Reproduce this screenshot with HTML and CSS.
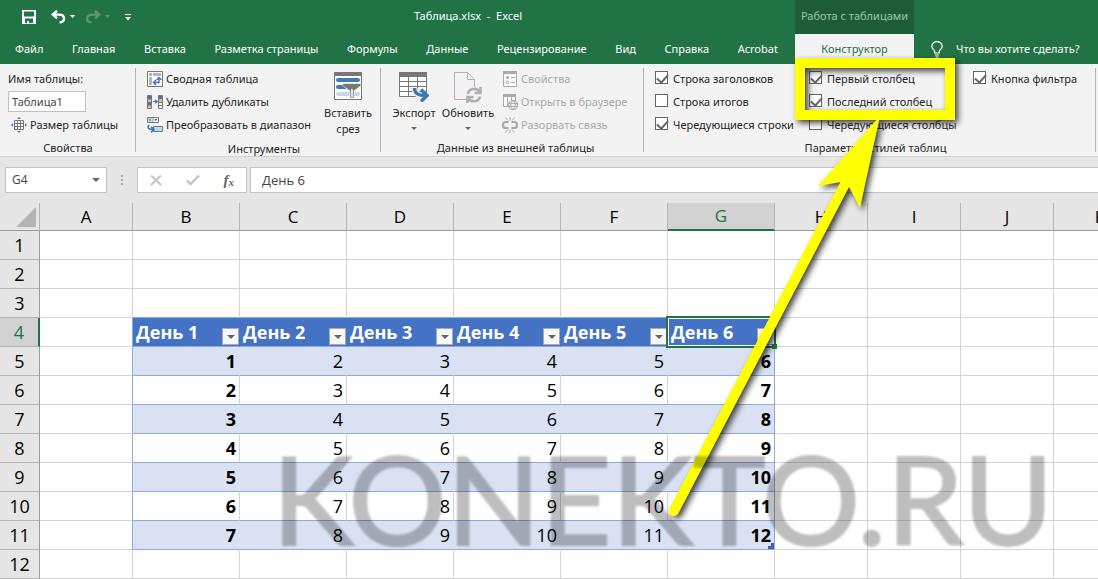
FILE: index.html
```html
<!DOCTYPE html>
<html lang="ru">
<head>
<meta charset="utf-8">
<title>Таблица.xlsx - Excel</title>
<link rel="stylesheet" href="styles.css">
</head>
<body>
<header class="titlebar">
  <div class="quick">
    <button class="quick-btn save" aria-label="Сохранить"><svg width="14" height="14" viewBox="0 0 14 14"><path fill="#fff" fill-rule="evenodd" d="M0 0h14v14H0zM2 1.500v5h10v-5zM3 8.500V13h2v-2h2v2h4V8.500z"/></svg></button>
    <button class="quick-btn undo" aria-label="Отменить"><svg width="24" height="14" viewBox="0 0 24 14"><path fill="none" stroke="#fff" stroke-width="2.400" d="M6 .8L1.800 4.600 6 8.400M2 4.600h6.500c3 0 4.500 1.600 4.500 4s-1.600 3.800-4.500 3.800"/><path fill="#fff" d="M19 5h5l-2.500 3z"/></svg></button>
    <button class="quick-btn redo" aria-label="Повторить"><svg width="24" height="14" viewBox="0 0 24 14"><g opacity=".25"><path fill="none" stroke="#fff" stroke-width="2.400" d="M9 .8l4.200 3.800L9 8.400M13 4.600H6.500C3.500 4.600 1 6.200 1 8.600s1.600 3.800 4.500 3.800"/><path fill="#fff" d="M19 5h5l-2.500 3z"/></g></svg></button>
    <button class="quick-btn more" aria-label="Настройка панели"><svg width="6" height="7" viewBox="0 0 6 7"><path fill="#fff" d="M0 0h6v1H0zM0 3h6L3 6.500z"/></svg></button>
  </div>
  <h1 class="doc-title">Таблица.xlsx&nbsp; -&nbsp; Excel</h1>
  <div class="context-title">Работа с таблицами</div>
</header>
<nav class="tabs">
  <div class="tab-list">
    <button>Файл</button>
    <button>Главная</button>
    <button>Вставка</button>
    <button>Разметка страницы</button>
    <button>Формулы</button>
    <button>Данные</button>
    <button>Рецензирование</button>
    <button>Вид</button>
    <button>Справка</button>
    <button>Acrobat</button>
  </div>
  <button class="active">Конструктор</button>
  <button class="tell"><svg width="12" height="17" viewBox="0 0 12 17"><path fill="none" stroke="#fff" stroke-width="1.200" d="M3.700 12V10.500C3.700 9 .8 8 .8 5.200a5.200 4.600 0 0 1 10.400 0C11.200 8 8.300 9 8.300 10.500V12zM4 14h4M4.500 16h3"/></svg>Что вы хотите сделать?</button>
</nav>
<section class="ribbon">
  <div class="group props">
    <div class="rows">
      <label class="row" for="tname">Имя таблицы:</label>
      <div class="row"><input class="tname" id="tname" value="Таблица1"></div>
      <button class="row resize"><svg width="16" height="16" viewBox="0 0 16 16"><path fill="#fff" stroke="#777" d="M3.500 3.500h9v9h-9zM3.500 6.500h9M3.500 9.500h9M6.500 3.500v9M9.500 3.500v9"/><path fill="#4a7ebb" d="M6 2l2-2 2 2zM6 14l2 2 2-2zM2 6L0 8l2 2zM14 6l2 2-2 2z"/></svg>Размер таблицы</button>
    </div>
    <div class="group-name">Свойства</div>
  </div>
  <div class="group tools">
    <div class="group-body">
      <div class="rows">
        <button class="row"><svg width="16" height="16" viewBox="0 0 16 16"><path fill="#fff" stroke="#777" d="M.5.5h15v15H.5z"/><path fill="#b5b5b5" d="M2 2h3v3H2zM6 2h8v3H6zM2 6h3v8H2z"/><path fill="none" stroke="#3f78b8" stroke-width="1.400" d="M6.500 11.500h5.500V7M9 9l-2.500 2.500L9 14M9.500 9L12 6.500 14.500 9"/></svg>Сводная таблица</button>
        <button class="row"><svg width="16" height="16" viewBox="0 0 16 16"><path fill="#fff" stroke="#777" d="M.5 1.500h4v13h-4zM11.500 1.500h4v13h-4z"/><path fill="#3f78b8" d="M1 2h3v3H1zM12 2h3v3h-3z"/><path fill="#eebb72" d="M1 5h3v3H1zM1 11h3v3H1zM12 5h3v3h-3z"/><path fill="#3f78b8" d="M1 8h3v3H1z"/><path fill="none" stroke="#777" d="M11.500 8.500h4M11.500 11.500h4M.5 5h4M.5 11h4"/><path fill="none" stroke="#3f78b8" stroke-width="1.200" d="M6 7.500h4M8.300 5.700l1.900 1.800-1.900 1.800"/></svg>Удалить дубликаты</button>
        <button class="row"><svg width="16" height="16" viewBox="0 0 16 16"><path fill="#fff" stroke="#777" d="M.5.5h11v5H.5zM6 .5v5"/><path fill="#c5d7ea" d="M1 1h4.500v4H1z"/><path fill="#666" d="M2 2.500h2v1H2zM7.300 2h3L8.800 4.200z"/><path fill="#c5d7ea" stroke="#777" d="M6.500 9.500h9v5h-9z"/><path fill="none" stroke="#3f78b8" stroke-width="1.600" d="M2 8c-2 3 0 4.500 4 4.500M4 9.800l3 2.700-3 2.900"/></svg>Преобразовать в диапазон</button>
      </div>
      <button class="big"><svg width="28" height="28" viewBox="0 0 28 28"><path fill="#fff" stroke="#777" d="M.5.5h27v27H.5z"/><path fill="#777" d="M0 0h28v4H0z"/><path fill="#3f78b8" d="M4 6h20a2 2 0 0 1 0 4H4a2 2 0 0 1 0-4zM4 13h8v4H4a2 2 0 0 1 0-4z"/><path fill="#c5d7ea" d="M4 20h20a2 2 0 0 1 0 4H4a2 2 0 0 1 0-4z"/><path fill="#777" stroke="#fff" stroke-width=".6" d="M8.500 11.500H27v2l-7 5.500V26h-4v-7l-7.500-5.500z"/><path stroke="#fff" stroke-width="1.600" d="M18 17v8"/></svg><span>Вставить<br>срез</span></button>
    </div>
    <div class="group-name">Инструменты</div>
  </div>
  <div class="group external">
    <div class="group-body">
      <button class="big export"><svg width="30" height="30" viewBox="0 0 30 30"><path fill="#fff" stroke="#777" d="M.5.5h27v24H.5zM.5 9.500h27M.5 14.500h27M.5 19.500h27M9.500 4v20M18.500 4v20"/><path fill="#777" d="M0 0h28v5H0z"/><path fill="none" stroke="#f3f3f3" stroke-width="6" d="M15.500 16c0 5 3 7.500 11 7.500"/><path fill="none" stroke="#3f78b8" stroke-width="3.500" d="M15.500 16c0 5 3 7.500 12 7.500M22 17.500l6 6-6 6"/></svg><span>Экспорт</span><i class="caret"></i></button>
      <button class="big refresh"><svg width="28" height="31" viewBox="0 0 28 31"><path fill="#f6f1f6" stroke="#b0b0b0" d="M.5.5h13l7 7v20H.5zM13.500.5v7h7"/><circle cx="20" cy="23" r="8" fill="#f3f3f3"/><path fill="none" stroke="#b0b0b0" stroke-width="2.600" d="M14 22c.5-6 9-7 12-1.500M26.500 15v6h-6M26 24.500c-1 5.500-9 6.500-12 1.500M13.500 31v-6h6"/></svg><span>Обновить</span><i class="caret"></i></button>
      <div class="rows">
        <button class="row" disabled><svg width="16" height="16" viewBox="0 0 16 16"><path fill="#fafafa" stroke="#aaa" d="M1.500.5h13v15h-13z"/><path fill="#aaa" d="M1 0h14v3H1zM9 6h4v1H9zM9 11h4v1H9z"/><circle cx="5.500" cy="6.500" r="1.500" fill="#aaa"/><circle cx="5.500" cy="11.500" r="1.300" fill="none" stroke="#aaa"/></svg>Свойства</button>
        <button class="row" disabled><svg width="16" height="16" viewBox="0 0 16 16"><path fill="#fafafa" stroke="#aaa" d="M1.500.5h12v12h-12zM5.500 2v10.500M9.500 2v10"/><path fill="#aaa" d="M1 0h13v3H1z"/><circle cx="11" cy="11" r="4.500" fill="#f3f3f3" stroke="#aaa" stroke-width="1.200"/><path fill="none" stroke="#aaa" d="M6.500 9.500h9M6.500 12.500h9M11 6.500c-3 2-3 7 0 9M11 6.500c3 2 3 7 0 9"/></svg>Открыть в браузере</button>
        <button class="row" disabled><svg width="16" height="16" viewBox="0 0 16 16"><path fill="none" stroke="#aaa" stroke-width="2.200" d="M6.500 5H4a3 3 0 0 0 0 6h2.500M9.500 5H12a3 3 0 0 1 0 6H9.500"/><path fill="none" stroke="#aaa" d="M3.500.5L6 3.500M8 0v3.500M12.500.5L10 3.500M3.500 15.500L6 12.500M8 16v-3.500M12.500 15.500L10 12.500"/></svg>Разорвать связь</button>
      </div>
    </div>
    <div class="group-name">Данные из внешней таблицы</div>
  </div>
  <div class="group options">
    <div class="checks">
      <label class="row"><input type="checkbox" checked>Строка заголовков</label>
      <label class="row"><input type="checkbox" checked>Первый столбец</label>
      <label class="row"><input type="checkbox" checked>Кнопка фильтра</label>
      <label class="row"><input type="checkbox">Строка итогов</label>
      <label class="row last"><input type="checkbox" checked>Последний столбец</label>
      <label class="row"><input type="checkbox" checked>Чередующиеся строки</label>
      <label class="row"><input type="checkbox">Чередующиеся столбцы</label>
    </div>
    <div class="group-name">Параметры стилей таблиц</div>
  </div>
</section>
<section class="formula-row">
  <div class="namebox"><input aria-label="Имя ячейки" value="G4"><button aria-label="Список имён"><i class="caret"></i></button></div>
  <svg class="dots" width="2" height="10" viewBox="0 0 2 10"><path fill="#aaa" d="M0 0h2v2H0zM0 4h2v2H0zM0 8h2v2H0z"/></svg>
  <div class="fx">
    <button aria-label="Отмена"><svg width="12" height="12" viewBox="0 0 12 12"><path stroke="#c3c3c3" stroke-width="1.800" d="M1 1.500l10 9.500M11 1.500L1 11"/></svg></button>
    <button aria-label="Ввод"><svg width="14" height="12" viewBox="0 0 14 12"><path fill="none" stroke="#c3c3c3" stroke-width="2.400" d="M1 6.500L4.500 10 13 1.500"/></svg></button>
    <button class="fx-btn" aria-label="Вставить функцию">f<sub>x</sub></button>
  </div>
  <input class="formula" aria-label="Строка формул" value="День 6">
</section>
<main class="sheet">
  <table class="grid">
    <colgroup><col class="c-num"><col class="c-std"><col class="c-day" span="6"><col class="c-std" span="4"></colgroup>
    <thead><tr><th class="corner"><svg width="20" height="20" viewBox="0 0 20 20"><path fill="#b4b4b4" d="M20 0v20H0z"/></svg></th><th>A</th><th>B</th><th>C</th><th>D</th><th>E</th><th>F</th><th class="sel">G</th><th>H</th><th>I</th><th>J</th><th>K</th></tr></thead>
    <tbody>
      <tr><th>1</th><td></td><td></td><td></td><td></td><td></td><td></td><td></td><td></td><td></td><td></td><td></td></tr>
      <tr><th>2</th><td></td><td></td><td></td><td></td><td></td><td></td><td></td><td></td><td></td><td></td><td></td></tr>
      <tr class="above"><th>3</th><td></td><td></td><td></td><td></td><td></td><td></td><td></td><td></td><td></td><td></td><td></td></tr>
      <tr class="data head"><th class="sel">4</th><td></td><td><div>День 1<button aria-label="Фильтр"><i class="caret"></i></button></div></td><td><div>День 2<button aria-label="Фильтр"><i class="caret"></i></button></div></td><td><div>День 3<button aria-label="Фильтр"><i class="caret"></i></button></div></td><td><div>День 4<button aria-label="Фильтр"><i class="caret"></i></button></div></td><td><div>День 5<button aria-label="Фильтр"><i class="caret"></i></button></div></td><td class="cursor"><div>День 6<button aria-label="Фильтр"><i class="caret"></i></button></div></td><td></td><td></td><td></td><td></td></tr>
      <tr class="data band"><th>5</th><td></td><td>1</td><td>2</td><td>3</td><td>4</td><td>5</td><td>6</td><td></td><td></td><td></td><td></td></tr>
      <tr class="data"><th>6</th><td></td><td>2</td><td>3</td><td>4</td><td>5</td><td>6</td><td>7</td><td></td><td></td><td></td><td></td></tr>
      <tr class="data band"><th>7</th><td></td><td>3</td><td>4</td><td>5</td><td>6</td><td>7</td><td>8</td><td></td><td></td><td></td><td></td></tr>
      <tr class="data"><th>8</th><td></td><td>4</td><td>5</td><td>6</td><td>7</td><td>8</td><td>9</td><td></td><td></td><td></td><td></td></tr>
      <tr class="data band"><th>9</th><td></td><td>5</td><td>6</td><td>7</td><td>8</td><td>9</td><td>10</td><td></td><td></td><td></td><td></td></tr>
      <tr class="data"><th>10</th><td></td><td>6</td><td>7</td><td>8</td><td>9</td><td>10</td><td>11</td><td></td><td></td><td></td><td></td></tr>
      <tr class="data band"><th>11</th><td></td><td>7</td><td>8</td><td>9</td><td>10</td><td>11</td><td class="end">12</td><td></td><td></td><td></td><td></td></tr>
      <tr><th>12</th><td></td><td></td><td></td><td></td><td></td><td></td><td></td><td></td><td></td><td></td><td></td></tr>
    </tbody>
  </table>
</main>
<svg class="pointer" width="300" height="540" viewBox="660 0 300 540" aria-hidden="true">
  <path fill="none" stroke="#ff0" stroke-width="10" d="M800 63h150v52H800z"/>
  <path stroke="#ff0" stroke-width="10" stroke-linecap="round" d="M674 511L845 184"/>
  <path fill="#ff0" d="M880 116L818 186l23-4 8 5 11 21z"/>
</svg>
<div class="watermark">KONEKTO.RU</div>
</body>
</html>
```
FILE: styles.css
```css
* { box-sizing: border-box; }
body {
  margin: 0;
  min-height: 100vh;
  position: relative;
  overflow: hidden;
  background: #e6e6e6;
  color: #262626;
  font: 11px/16px "Noto Sans", "Open Sans", sans-serif;
}
button, input { font: inherit; color: inherit; }
button { border: 0; padding: 0; background: none; }
svg { flex: none; display: block; }

.titlebar, .tabs { display: grid; background: #217346; color: #fff; white-space: nowrap; }
.titlebar { grid-template-columns: 141px 1fr 119px 184px; height: 34px; }
.quick { display: flex; align-items: center; padding-left: 22px; }
.quick-btn { flex: none; }
.undo { margin-left: 15px; }
.redo { margin-left: 11px; }
.more { margin-left: 15px; }
.doc-title { margin: 0; font: inherit; line-height: 32px; text-align: center; }
.context-title { background: #1c5c38; color: #9fc9af; line-height: 32px; text-align: center; }

.tabs { grid-template-columns: 1fr 119px 184px; height: 30px; }
.tab-list { display: flex; justify-content: space-between; padding: 0 17px 0 15px; }
.tabs .active { background: #f3f3f3; color: #217346; }
.tell { display: flex; align-items: center; gap: 13px; padding-left: 17px; }

.ribbon { display: flex; height: 93px; padding-top: 3px; background: #f3f3f3; border-bottom: 1px solid #d2d2d2; white-space: nowrap; }
.group { position: relative; flex: none; display: flex; flex-direction: column; }
.group::after { content: ""; position: absolute; right: 0; top: 1px; bottom: 4px; border-right: 1px solid #b5b5b5; }
.props { width: 136px; padding-left: 8px; }
.tools { width: 245px; padding-left: 11px; }
.external { width: 263px; padding-left: 6px; }
.options { width: 452px; padding-left: 11px; }
.group-body { display: flex; }
.rows { display: flex; flex-direction: column; }
.row { display: flex; align-items: center; gap: 3px; height: 23px; }
.row:disabled { color: #aaa; }
.resize { padding-left: 3px; }
.tname { width: 78px; height: 21px; padding: 0 3px; border: 1px solid #c0c0c0; background: #fff; color: #444; }
.group-name { margin-top: 4px; text-align: center; }
.props .group-name { margin-left: -8px; }
.big { display: flex; flex-direction: column; align-items: center; padding-top: 5px; width: 54px; }
.big svg { margin-bottom: 5px; }
.tools .big { margin: 0 6px 0 auto; }
.big.export svg { margin-bottom: 3px; }
.big.refresh svg { margin-bottom: 2px; }
.big .caret { margin-top: 6px; }
.big.refresh { margin-right: 7px; }
.caret { display: block; border: 3px solid transparent; border-top-color: #666; border-bottom: 0; }
.checks { display: grid; grid-template-columns: 154px 164px 1fr; }
.checks .row { gap: 5px; }
.checks .last { grid-column: span 2; }
input[type="checkbox"] {
  appearance: none;
  position: relative;
  flex: none;
  width: 13px;
  height: 13px;
  margin: 0 0 2px;
  border: 1px solid #666;
  background: #fff;
}
input[type="checkbox"]:checked::after {
  content: "";
  position: absolute;
  left: 3px;
  top: 0;
  width: 5px;
  height: 9px;
  border: solid #666;
  border-width: 0 2px 2px 0;
  transform: rotate(42deg);
}

.formula-row { display: flex; align-items: center; height: 46px; padding-left: 5px; color: #444; font-family: "Open Sans", "Noto Sans", sans-serif; }
.formula-row > * { flex: none; }
.namebox { display: flex; width: 102px; height: 26px; border: 1px solid #c3c3c3; background: #fff; font-size: 12px; }
.namebox input { flex: 1; min-width: 0; padding: 0 6px; border: 0; background: none; }
.namebox button { width: 20px; display: flex; align-items: center; justify-content: center; }
.namebox .caret, .grid .caret { border-width: 4px 4px 0; }
.dots { margin: 0 14px; }
.fx { display: flex; align-items: center; justify-content: space-around; width: 110px; height: 26px; margin-right: 3px; border: 1px solid #c3c3c3; background: #fff; }
.fx-btn { font: italic bold 15px/16px "Liberation Serif", serif; color: #666; }
.fx-btn sub { font-size: 11px; line-height: 1px; vertical-align: -1px; }
.formula-row .formula { flex: 1; height: 26px; padding: 0 11px; border: 1px solid #c3c3c3; border-right: 0; background: #fff; font-size: 13px; }

.sheet { overflow: hidden; }
.grid { width: 1147px; table-layout: fixed; border-spacing: 0; font: 18px/28px "Open Sans", "Noto Sans", sans-serif; color: #000; }
.c-num { width: 40px; }
.c-std { width: 93px; }
.c-day { width: 107px; }
.grid th { padding: 0; font-weight: 400; }
.grid thead th { height: 28px; line-height: 26px; font-size: 17px; border-right: 1px solid #b5b5b5; border-bottom: 1px solid #9b9b9b; }
.grid thead .sel { background: #d2d2d2; color: #217346; border-bottom: 2px solid #217346; }
.grid .corner svg { margin: 0 0 0 16px; }
.grid tbody th { height: 29px; line-height: 28px; background: #e6e6e6; border-right: 1px solid #9b9b9b; border-bottom: 1px solid #b5b5b5; }
.grid tbody .sel { background: #d2d2d2; color: #217346; border-right: 2px solid #217346; }
.grid td { height: 29px; padding: 0 3px; background: #fff; border-right: 1px solid #d4d4d4; border-bottom: 1px solid #d4d4d4; text-align: right; }
.data td:nth-child(2), .data td:nth-child(8) { border-right-color: #8ea9db; }
.data td:nth-child(n+3):nth-child(-n+8), .above td:nth-child(n+3):nth-child(-n+8) { border-bottom-color: #8ea9db; }
.data td:nth-child(3), .data td:nth-child(8) { font-weight: 700; }
.band td:nth-child(n+3):nth-child(-n+8) { background: #d9e1f2; }
.band td:nth-child(n+3):nth-child(-n+7) { border-right-color: #d9e1f2; }
.head td:nth-child(n+3):nth-child(-n+8) { background: #4472c4; color: #fff; font-weight: 700; border-right-color: #4472c4; padding-right: 0; }
.head div { display: flex; justify-content: space-between; align-items: flex-end; height: 28px; }
.head button { display: flex; align-items: center; justify-content: center; width: 17px; height: 17px; margin-bottom: 1px; border: 1px solid #ababab; background: #f7f7f7; }
.cursor { position: relative; }
.cursor::before { content: ""; position: absolute; inset: -2px; border: 2px solid #217346; outline: 1px solid #fff; outline-offset: -3px; }
.cursor::after { content: ""; position: absolute; right: -3px; bottom: -3px; width: 5px; height: 5px; background: #217346; }
.end { position: relative; }
.end::after { content: ""; position: absolute; right: 0; bottom: 0; width: 6px; height: 6px; background: #3f5fb5; clip-path: polygon(50% 0, 100% 0, 100% 100%, 0 100%, 0 50%, 50% 50%); }

.pointer { position: absolute; left: 660px; top: 0; filter: drop-shadow(3px 3px 3px rgba(0, 0, 0, .75)); pointer-events: none; }
.watermark {
  position: absolute;
  left: 272px;
  top: 425px;
  font: 123px/146px Lato, sans-serif;
  color: #000;
  -webkit-text-stroke: 2px #000;
  opacity: .25;
  filter: blur(1px);
  white-space: nowrap;
  pointer-events: none;
}
```
